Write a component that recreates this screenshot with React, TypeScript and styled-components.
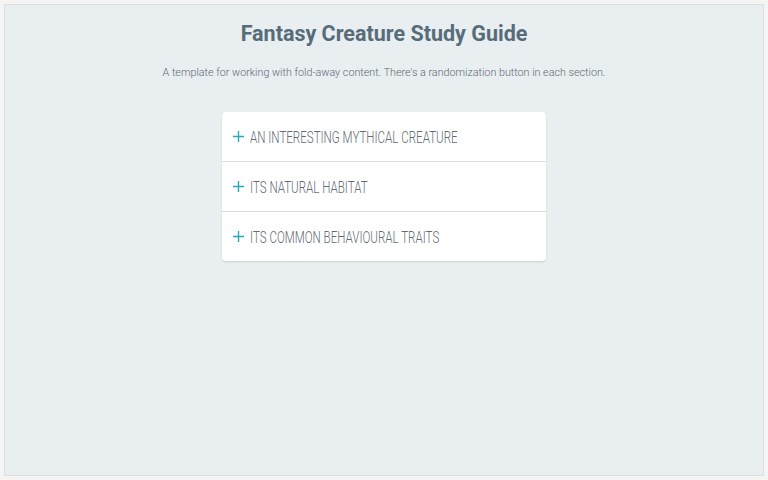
import styled, { createGlobalStyle } from 'styled-components';

const GlobalStyle = createGlobalStyle`
  * {
    box-sizing: border-box;
  }
  html,
  body {
    margin: 0;
    height: 100%;
    background: #f5f5f5;
  }
  #root {
    height: 100%;
    padding: 4px;
  }
`;

const Page = styled.main`
  height: 100%;
  background-color: #e9eef1;
  border: 1px solid #dcdfe1;
  display: flex;
  flex-direction: column;
  align-items: center;
  font-family: Roboto, 'Liberation Sans', sans-serif;
`;

const Title = styled.h1`
  margin: 16px 0 0;
  font-size: 21.5px;
  font-weight: 700;
  color: #566d79;
  line-height: 26px;
`;

const Lead = styled.p`
  margin: 19px 0 0;
  font-size: 10.75px;
  font-weight: 300;
  color: #5d6a72;
  line-height: 14px;
`;

const Accordion = styled.section`
  margin-top: 32px;
  width: 324px;
  background: #fff;
  border-radius: 4px;
  box-shadow: 0 1px 2px rgba(0, 0, 0, 0.12);
`;

const Item = styled.div`
  & + & {
    border-top: 1px solid #d9dee1;
  }
`;

const Toggle = styled.button`
  display: flex;
  align-items: center;
  gap: 6px;
  width: 100%;
  height: 49px;
  padding: 0 0 0 11px;
  border: 0;
  background: none;
  cursor: pointer;
  text-align: left;
  overflow: hidden;
`;

const Icon = styled.svg`
  flex: none;
  width: 11px;
  height: 11px;
`;

// condensed caps: no narrow face is installed, so squeeze a light one
const Label = styled.span`
  flex: none;
  display: inline-block;
  font-family: Roboto, sans-serif;
  font-weight: 300;
  font-size: 17px;
  color: #5f6c74;
  text-transform: uppercase;
  white-space: nowrap;
  transform: scaleX(0.68);
  transform-origin: left center;
`;

const PlusIcon = () => (
  <Icon viewBox="0 0 11 11" aria-hidden="true">
    <path d="M5.5 0v11M0 5.5h11" stroke="#2aa7b8" strokeWidth="1.4" fill="none" />
  </Icon>
);

const sections = [
  'An interesting mythical creature',
  'Its natural habitat',
  'Its common behavioural traits',
];

export default function App() {
  return (
    <>
      <GlobalStyle />
      <Page>
        <Title>Fantasy Creature Study Guide</Title>
        <Lead>
          A template for working with fold-away content. There's a randomization button in each
          section.
        </Lead>
        <Accordion>
          {sections.map((s) => (
            <Item key={s}>
              <Toggle>
                <PlusIcon />
                <Label>{s}</Label>
              </Toggle>
            </Item>
          ))}
        </Accordion>
      </Page>
    </>
  );
}
